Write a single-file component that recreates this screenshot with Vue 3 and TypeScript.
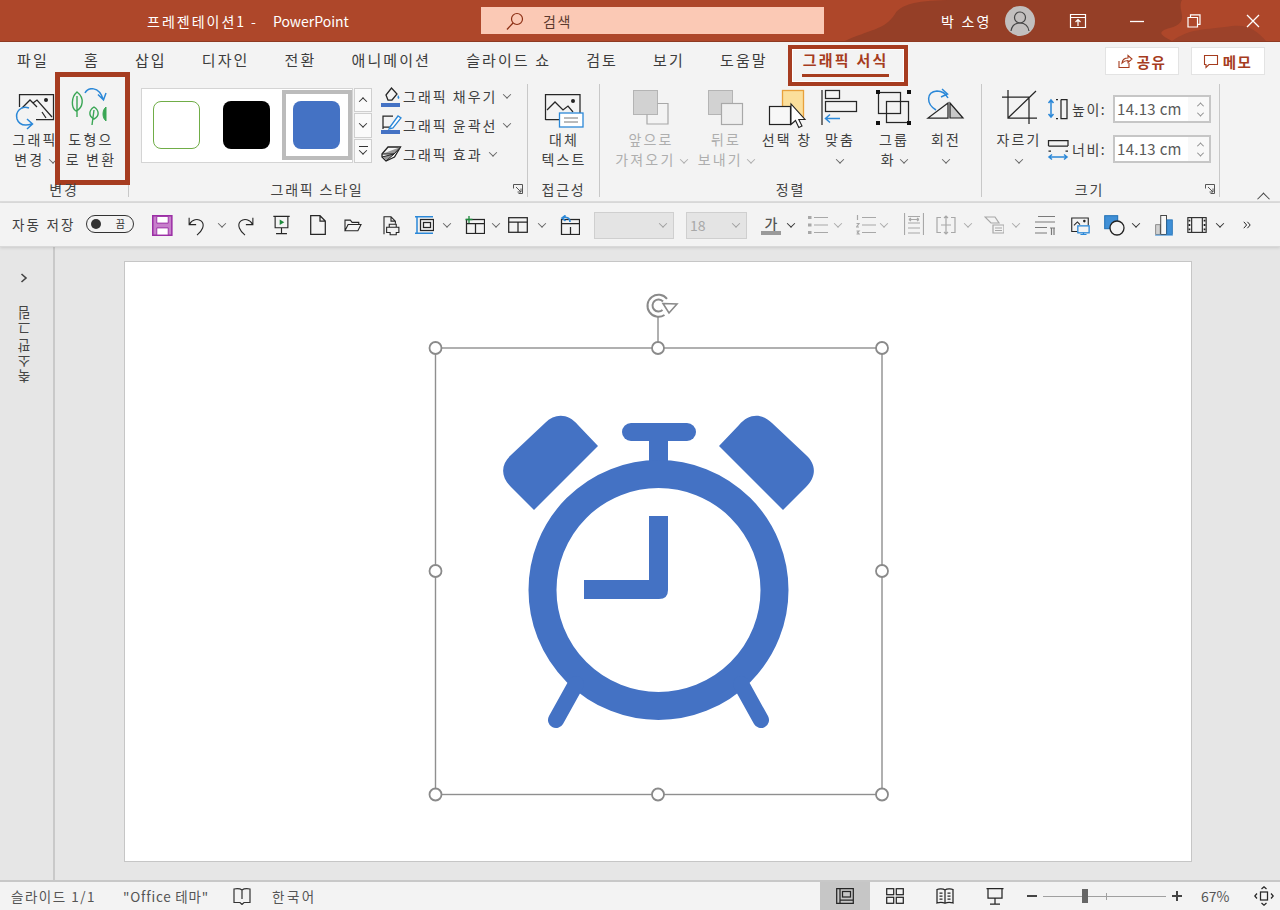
<script setup lang="ts">
const tabs: string[] = ['파일', '홈', '삽입', '디자인', '전환', '애니메이션', '슬라이드 쇼', '검토', '보기', '도움말']
const handles: [number, number][] = [
  [435.5, 348], [658, 348], [882, 348], [435.5, 571], [882, 571], [435.5, 794.5], [658, 794.5], [882, 794.5],
]
</script>

<template>
  <div class="app">
    <header class="titlebar">
      <svg class="title-art" viewBox="0 0 1280 41" width="1280" height="41">
        <path d="M845 41C868 30 885 30 895 14 902 2 925 0 960 0H1182C1176 10 1192 22 1170 28 1155 32 1162 36 1172 41Z" fill="#953f27" />
        <path d="M1172 41C1190 28 1205 30 1232 26 1250 24 1258 32 1266 41Z" fill="#9c422a" />
      </svg>
      <div class="doc-title"><span class="doc-name">프레젠테이션1</span><span class="dash">-</span><span>PowerPoint</span></div>
      <div class="search">
        <svg width="20" height="20" viewBox="0 0 20 20"><circle cx="12" cy="8" r="5.500" fill="none" stroke="#8c2f14" stroke-width="1.200" /><path d="M8 12 2 18.500" stroke="#8c2f14" stroke-width="1.300" /></svg>
        <span>검색</span>
      </div>
      <div class="user">박 소영</div>
      <div class="avatar">
        <svg width="30" height="30" viewBox="0 0 30 30"><circle cx="15" cy="11.500" r="5.500" fill="none" stroke="#444" stroke-width="1.200" /><path d="M6 25c1-6 4.500-8 9-8s8 2 9 8" fill="none" stroke="#444" stroke-width="1.200" /></svg>
      </div>
      <svg class="win w-mode" width="20" height="16" viewBox="0 0 20 16"><path d="M2.500 1.500h15v13h-15zM2.500 4.500h15M10 13V7M7.500 9 10 6.500 12.500 9" fill="none" stroke="#fff" stroke-width="1.200" /></svg>
      <svg class="win w-min" width="14" height="14" viewBox="0 0 14 14"><path d="M0 7.500h14" stroke="#fff" stroke-width="1.300" /></svg>
      <svg class="win w-max" width="14" height="14" viewBox="0 0 14 14"><path d="M3.500 3V.8h9.500v9.500h-2.500M1 3.500h9.500V13H1z" fill="none" stroke="#fff" stroke-width="1.200" /></svg>
      <svg class="win w-close" width="14" height="14" viewBox="0 0 14 14"><path d="M1 1l12 12M13 1 1 13" stroke="#fff" stroke-width="1.300" /></svg>
    </header>

    <nav class="tabs">
      <span v-for="t in tabs" :key="t" class="tab">{{ t }}</span>
      <span class="tab tab-active">그래픽 서식</span>
      <div class="tab-actions">
        <button class="pill">
          <svg width="16" height="16" viewBox="0 0 16 16"><path d="M2 8v6.500h10V10M5 10c.5-3.500 3-5 6-5V2.500L15 6l-4 3.500V7.500c-2.500 0-4.500 1-6 2.500z" fill="none" stroke="#a63c1e" stroke-width="1.100" /></svg>
          <span>공유</span>
        </button>
        <button class="pill">
          <svg width="16" height="16" viewBox="0 0 16 16"><path d="M1.500 2.500h13v9H6l-3 3v-3H1.500z" fill="none" stroke="#a63c1e" stroke-width="1.100" /></svg>
          <span>메모</span>
        </button>
      </div>
    </nav>

    <section class="ribbon">
      <div class="group g1">
        <div class="group-body">
          <div class="big w-change">
            <svg width="42" height="42" viewBox="14 88 42 42">
              <path class="ln" d="M19.500 107V94.500H53.500V119.500H36" />
              <path class="ln" d="M22 108 30 100 37 107M33 103 37 100 52 117M42 112 46 118" />
              <circle cx="46" cy="100" r="2" fill="#222" />
              <path class="bl" d="M29 108C21 105 15 112 17 119 19 125 25 126 32 124M27 119 32.500 124 27 129" />
            </svg>
            <div class="lbl">그래픽<br />변경 <i class="ch"></i></div>
          </div>
          <div class="big w-convert annot">
            <svg width="44" height="42" viewBox="70 88 44 42">
              <path class="gr" d="M78 92C72 97 72 108 77 111 84 108 86 98 78 92ZM78 96V117" />
              <path class="bl" d="M86 93C89 87 100 86 104 99M99 94.500 104.500 100 107 93" />
              <path class="gr" d="M95 107C90 110 89 116 95 119 101 116 100 110 95 107ZM95 110 93 125" />
              <path d="M107 107C103 110 103 118 107 121Z" fill="#3aa655" stroke="#3aa655" />
            </svg>
            <div class="lbl">도형으<br />로 변환</div>
          </div>
        </div>
        <div class="group-name">변경</div>
      </div>

      <div class="group g2">
        <div class="group-body styles">
          <div class="gallery">
            <div class="swatch-cell"><div class="swatch s-white"></div></div>
            <div class="swatch-cell"><div class="swatch s-black"></div></div>
            <div class="swatch-cell selected"><div class="swatch s-blue"></div></div>
          </div>
          <div class="spinner">
            <div class="spin-btn"><i class="ch up dark"></i></div>
            <div class="spin-btn"><i class="ch dark"></i></div>
            <div class="spin-btn more"><i class="bar"></i><i class="ch dark"></i></div>
          </div>
          <div class="style-list">
            <div class="style-row">
              <svg width="22" height="24" viewBox="378 84 22 24">
                <path class="ln" d="M384 95 389.500 88 395 94 390 100H386Z" />
                <path d="M396 95c1.500 2 2 3 .5 4-1.500-1-1-2-.5-4z" fill="#2b88d8" />
                <path d="M379 103h19v4h-19z" fill="#4472c4" />
              </svg>
              <span>그래픽 채우기</span><i class="ch"></i>
            </div>
            <div class="style-row">
              <svg width="22" height="24" viewBox="378 113 22 24">
                <path class="ln" d="M381 129V116H391M381 127H388" />
                <path d="M388 127 396 116 399 118 391 128 387 129Z" fill="#fff" stroke="#2b88d8" stroke-width="1.300" />
                <path d="M379 130h19v4h-19z" fill="#4472c4" />
              </svg>
              <span>그래픽 윤곽선</span><i class="ch"></i>
            </div>
            <div class="style-row">
              <svg width="22" height="24" viewBox="378 143 22 24">
                <path d="M380 155 386 148H398.500L392.500 158 384 162 380 158Z" fill="#f7f7f7" stroke="#222" stroke-width="1.300" />
                <path d="M380 155H392L398.500 148M392 155 384 162 380 158Z" fill="#9a9a9a" stroke="#222" stroke-width="1" />
              </svg>
              <span>그래픽 효과</span><i class="ch"></i>
            </div>
          </div>
        </div>
        <div class="group-name name-styles">그래픽 스타일
          <svg class="launcher" width="10" height="10" viewBox="0 0 10 10"><path d="M.500 4.500V.5H9.500V9.500H5.500M3 3 8 8M8 4.500V8H4.500" fill="none" stroke="#555" /></svg>
        </div>
      </div>

      <div class="group g3">
        <div class="group-body">
          <div class="big w-alt">
            <svg width="42" height="42" viewBox="545 88 42 42">
              <path class="ln" d="M547.500 120V94.500H582V113M547.500 119.500H561" />
              <path class="ln" d="M549 110 557 102 565 110 570 106 575 112" />
              <circle cx="575" cy="101" r="2" fill="#222" />
              <rect x="561.500" y="113" width="23.500" height="14" fill="#fff" stroke="#2b88d8" stroke-width="1.300" />
              <path d="M566 118h14M566 122h14" stroke="#777" />
            </svg>
            <div class="lbl">대체<br />텍스트</div>
          </div>
        </div>
        <div class="group-name">접근성</div>
      </div>

      <div class="group g4">
        <div class="group-body">
          <div class="big w-front off">
            <svg width="44" height="42" viewBox="630 88 44 42">
              <rect x="634.500" y="90.500" width="24" height="24" fill="#d2d2d2" stroke="#b4b4b4" />
              <path d="M658.500 103.500H669V124H648V114.500" fill="none" stroke="#a8a8a8" stroke-width="1.200" />
            </svg>
            <div class="lbl">앞으로<br />가져오기 <i class="ch"></i></div>
          </div>
          <div class="big w-back off">
            <svg width="44" height="42" viewBox="704 88 44 42">
              <rect x="708.500" y="90.500" width="24" height="24" fill="#d2d2d2" stroke="#b4b4b4" />
              <rect x="721.500" y="103.500" width="21" height="21" fill="#efefef" stroke="#a8a8a8" stroke-width="1.200" />
            </svg>
            <div class="lbl">뒤로<br />보내기 <i class="ch"></i></div>
          </div>
          <div class="big w-pane">
            <svg width="44" height="42" viewBox="765 88 44 42">
              <rect x="782.500" y="90.500" width="21" height="28" fill="#fbdf9b" stroke="#e8a13c" stroke-width="1.300" />
              <rect x="769.500" y="106.500" width="21" height="18" fill="#f7f7f7" stroke="#222" stroke-width="1.200" />
              <path d="M791 104V124.500L795.500 120.500 798.800 127.500 802 126 798.800 119.500H805Z" fill="#fff" stroke="#222" stroke-width="1.100" />
            </svg>
            <div class="lbl">선택 창</div>
          </div>
          <div class="big w-align">
            <svg width="40" height="42" viewBox="822 88 40 42">
              <path class="ln" d="M824 90V125" />
              <rect class="ln" x="827.500" y="90.500" width="14" height="8" />
              <rect class="ln" x="827.500" y="101.500" width="31" height="10" />
              <path class="bl" d="M842 118.500H828M832 114.500 827.500 118.500 832 122.500" />
            </svg>
            <div class="lbl">맞춤<br /><i class="ch"></i></div>
          </div>
          <div class="big w-group">
            <svg width="40" height="42" viewBox="874 88 40 42">
              <rect class="ln" x="878.500" y="92.500" width="22" height="21" />
              <rect class="ln" x="886.500" y="101.500" width="22" height="21" />
              <path d="M876 90h4v4h-4zM907 90h4v4h-4zM876 121h4v4h-4zM907 121h4v4h-4z" fill="#111" />
            </svg>
            <div class="lbl">그룹<br />화 <i class="ch"></i></div>
          </div>
          <div class="big w-rotate">
            <svg width="40" height="42" viewBox="926 88 40 42">
              <path class="ln" d="M928 118H948V103Z" />
              <path d="M950 103 963 118H950Z" fill="#c9c9c9" stroke="#222" stroke-width="1.200" />
              <path class="bl" d="M936 110C926 104 926 92 937 91 942 91 946 94 948 98M942 89 947.500 94 941 97" />
            </svg>
            <div class="lbl">회전<br /><i class="ch"></i></div>
          </div>
        </div>
        <div class="group-name name-arrange">정렬</div>
      </div>

      <div class="group g5">
        <div class="group-body">
          <div class="big w-crop">
            <svg width="42" height="42" viewBox="998 88 42 42">
              <path class="ln" d="M1008 90V118H1037M1002 97H1029V124M1008 118 1036 91" />
            </svg>
            <div class="lbl">자르기<br /><i class="ch"></i></div>
          </div>
          <div class="size-col">
            <div class="size-row">
              <svg width="22" height="24" viewBox="1048 97 22 24">
                <path class="bl" d="M1052 100V117M1049.500 103 1052 100 1054.500 103M1049.500 114 1052 117 1054.500 114" />
                <path class="ln" d="M1062 99.500H1068V118.500H1062V99.500M1057 99.500H1059M1057 118.500H1059" />
              </svg>
              <span class="size-label">높이:</span>
              <div class="spinbox"><span class="val">14.13 cm</span><span class="arrows"><i class="ch up light"></i><i class="ch light"></i></span></div>
            </div>
            <div class="size-row">
              <svg width="22" height="24" viewBox="1048 136 22 24">
                <path class="ln" d="M1049.500 145V139.500H1069V145M1049.500 145H1069M1049.500 150H1052M1066.500 150H1069" />
                <path class="bl" d="M1050 156H1068M1053 153.500 1050 156 1053 158.500M1065 153.500 1068 156 1065 158.500" />
              </svg>
              <span class="size-label">너비:</span>
              <div class="spinbox"><span class="val">14.13 cm</span><span class="arrows"><i class="ch up light"></i><i class="ch light"></i></span></div>
            </div>
          </div>
        </div>
        <div class="group-name name-size">크기
          <svg class="launcher" width="10" height="10" viewBox="0 0 10 10"><path d="M.500 4.500V.5H9.500V9.500H5.500M3 3 8 8M8 4.500V8H4.500" fill="none" stroke="#555" /></svg>
        </div>
      </div>
      <div class="collapse"><i class="ch up big-ch"></i></div>
    </section>

    <div class="qat">
      <span class="qat-label">자동 저장</span>
      <span class="toggle"><i class="knob"></i><span class="off-text">끔</span></span>
      <svg width="21" height="21" viewBox="0 0 22 22"><rect x=".8" y=".8" width="20" height="20.400" fill="#c77fcb" stroke="#9b2fa5" stroke-width="1.600" /><path d="M5 1.500h12v7H5zM5 13.500h12V21H5z" fill="#fff" stroke="#9b2fa5" /></svg>
      <svg width="18" height="21" viewBox="0 0 20 24"><path class="ln" d="M1 3V11H9M1.500 10.500C4 5 11 3.500 15 7 19.500 11.500 16 18 10 23" /></svg>
      <i class="ch q"></i>
      <svg width="18" height="21" viewBox="0 0 20 24"><path class="ln" d="M19 3V11H11M18.500 10.500C16 5 9 3.500 5 7 .5 11.500 4 18 10 23" /></svg>
      <svg width="19" height="20" viewBox="0 0 20 22"><path class="ln" d="M1 1.500H19M3 2V14H17V2M10 14V20M4 20.500H16" /><path d="M8 5 13 8 8 11Z" fill="#1e8a3c" /></svg>
      <svg width="16" height="20" viewBox="0 0 16 20"><path class="ln" d="M.7 .7H10L15.300 6V19.300H.7ZM10 .7V6H15.300" /></svg>
      <svg width="20" height="16" viewBox="0 0 20 18"><path class="ln" d="M1 15.500V3.500H7L9 6H16.500V8.500M1 15.500 4.500 8.500H19L15.500 15.500Z" /></svg>
      <svg width="18" height="21" viewBox="0 0 20 24"><path class="ln" d="M2 22V2H10L15 7V10M10 2V7H15" /><path class="ln" d="M5 14H19V20H16V22.500H9V20H5ZM8 14V10.500H16V14" /></svg>
      <svg width="20" height="18" viewBox="0 0 20 18"><path class="bl" d="M1 .8H19M1 17.200H19M3 1V17" /><rect class="ln" x="6.500" y="3.500" width="13" height="11" /><rect class="ln" x="9.500" y="6.500" width="7" height="5" /></svg>
      <i class="ch q"></i>
      <svg width="21" height="18" viewBox="0 0 21 18"><rect class="ln" x="2.500" y="3.500" width="18" height="14" /><path class="ln" d="M2.500 7.500H20.500M11.500 7.500V17.500" /><path d="M5 0V7M1.500 3.500H8.500" stroke="#1e8a3c" stroke-width="1.300" /></svg>
      <i class="ch q"></i>
      <svg width="20" height="16" viewBox="0 0 20 16"><rect class="ln" x=".7" y=".7" width="18.600" height="14.600" /><path class="ln" d="M.7 5H19.300M10 5V15.300" /></svg>
      <i class="ch q"></i>
      <svg width="20" height="20" viewBox="0 0 20 20"><rect class="ln" x="1.500" y="4.500" width="18" height="15" /><path class="ln" d="M1.500 8.500H19.500M10.500 12V19.500" /><path class="bl bl2" d="M10 7C10 2.500 6 1.500 2.500 3M5.500 .3 2 3 5.500 6" /></svg>
      <div class="dd off-box wide"><i class="ch"></i></div>
      <div class="dd off-box narrow"><span>18</span><i class="ch"></i></div>
      <div class="ga"><span>가</span><i></i></div>
      <i class="ch q dark-q"></i>
      <svg class="dis" width="20" height="22" viewBox="0 0 20 22"><path d="M6 3.500H20M6 11H20M6 18.500H20" /><path class="sq" d="M0 2h3.500v3H0zM0 9.500h3.500v3H0zM0 17h3.500v3H0z" /></svg>
      <i class="ch q off-ch"></i>
      <svg class="dis" width="20" height="22" viewBox="0 0 20 22"><path d="M6 3.500H20M6 11H20M6 18.500H20M1.500 1V6M.5 9.500H3L.5 13H3M.5 17H3L1.500 18.500 3 20H.5" /></svg>
      <i class="ch q off-ch"></i>
      <svg class="dis" width="20" height="24" viewBox="0 0 20 24"><path d="M.5 0V22M19.500 0V22M4 3.500H16M4 10H16M4 15H16M4 20H16M5 6.500H15M5 6.500 7 5M5 6.500 7 8M15 6.500 13 5M15 6.500 13 8" /></svg>
      <svg class="dis" width="20" height="22" viewBox="0 0 20 22"><path d="M5 3.500H1V18.500H5M15 3.500H19V18.500H15M5 11H15M10 2V20M8 4 10 2 12 4M8 18 10 20 12 18" /></svg>
      <i class="ch q off-ch"></i>
      <svg class="dis" width="20" height="18" viewBox="0 0 20 18"><path d="M1 1H11L15 7H7ZM9 9H20V17H9ZM11 12H18M11 14.500H18" /></svg>
      <i class="ch q off-ch"></i>
      <svg class="dis darker" width="20" height="22" viewBox="0 0 20 22"><path d="M3 2.500H20M0 8H20M0 13.500H12M0 19H12M15 14H20M16.500 14V21M19 14V21" /></svg>
      <svg width="20" height="20" viewBox="0 0 22 23"><path class="ln" d="M8 19H1.500V3.500H20.500V12" /><path class="ln" d="M4 12 8 8 11 11" /><circle cx="16" cy="7" r="1.500" fill="#222" /><rect class="bl" x="8.500" y="12.500" width="13" height="8" /><path class="bl" d="M15 20.500V23M11.500 22.500H18.500" /></svg>
      <svg width="22" height="21" viewBox="0 0 22 21"><rect x=".7" y=".7" width="13" height="13" fill="#3f8fd6" stroke="#1f6fb5" /><circle cx="13" cy="13" r="7" fill="#f3f3f3" stroke="#222" stroke-width="1.300" /></svg>
      <i class="ch q dark-q"></i>
      <svg width="20" height="21" viewBox="0 0 22 26"><rect x=".7" y="12" width="5.600" height="12" fill="#d0d0d0" stroke="#777" /><rect x="7" y=".7" width="7" height="23.300" fill="#f7f7f7" stroke="#222" /><rect x="14.500" y="6" width="6.800" height="18" fill="#3f8fd6" stroke="#1f6fb5" /><path d="M0 25H22" stroke="#2b88d8" /></svg>
      <svg width="20" height="16" viewBox="0 0 22 18"><rect class="ln" x=".7" y=".7" width="20.600" height="16.600" /><path class="ln" d="M5 1V17M17 1V17" /><path d="M1.500 3h2v2h-2zM1.500 8h2v2h-2zM1.500 13h2v2h-2zM18.500 3h2v2h-2zM18.500 8h2v2h-2zM18.500 13h2v2h-2z" fill="#222" /></svg>
      <i class="ch q dark-q"></i>
      <svg class="more-ic" width="8" height="8" viewBox="0 0 10 10"><path class="ln" d="M1 1 4.500 5 1 9M5.500 1 9 5 5.500 9" /></svg>
    </div>

    <main class="workspace">
      <aside class="thumbs">
        <svg width="8" height="10" viewBox="0 0 8 10"><path d="M1.500 1 6 5 1.500 9" fill="none" stroke="#444" stroke-width="1.600" /></svg>
        <span class="thumb-text">축소판 그림</span>
      </aside>
      <div class="stage">
        <div class="slide">
          <svg class="canvas" viewBox="124 261 1068 601" width="1068" height="601">
            <g fill="#4472c4">
              <path d="M598 446 534 510 511 487C500 476 501 464 511 455L545 423C555 413 568 413 578 425Z" />
              <path d="M719 446 783 510 806 487C817 476 816 464 806 455L772 423C762 413 749 413 739 425Z" />
              <rect x="622" y="423" width="74" height="18" rx="9" />
              <rect x="649" y="440" width="19" height="24" />
              <path d="M649 516H668V590Q668 599 659 599H584V580H649Z" />
            </g>
            <circle cx="658.500" cy="590" r="116" fill="none" stroke="#4472c4" stroke-width="28" />
            <path d="M576 684 556 720M741 684 761 720" fill="none" stroke="#4472c4" stroke-width="16" stroke-linecap="round" />
            <rect x="435.500" y="348" width="446.500" height="446.500" fill="none" stroke="#8f8f8f" stroke-width="1.400" />
            <path d="M658 316V342" stroke="#8f8f8f" stroke-width="1.400" />
            <circle v-for="(h, i) in handles" :key="i" :cx="h[0]" :cy="h[1]" r="6" fill="#fff" stroke="#8a8a8a" stroke-width="1.800" />
            <g fill="none" stroke="#8a8a8a">
              <path d="M664.500 315A11 11 0 1 1 667 298.800" stroke-width="2" />
              <path d="M662.500 310A6 6 0 1 1 663 301.500" stroke-width="2" />
              <path d="M663 303.500 677 304 669 313Z" fill="#fff" stroke-width="1.600" />
            </g>
          </svg>
        </div>
      </div>
    </main>

    <footer class="status">
      <span class="st-slide">슬라이드 1/1</span>
      <span class="st-theme">"Office 테마"</span>
      <svg class="st-book" width="18" height="18" viewBox="0 0 18 18"><path d="M9 3C7 1.500 4 1.500 1 2V15.500H7L9 17.500 11 15.500H17V2C14 1.500 11 1.500 9 3ZM9 3V12" fill="none" stroke="#333" stroke-width="1.200" /></svg>
      <span class="st-lang">한국어</span>
      <div class="views">
        <span class="view active"><svg width="18" height="16" viewBox="0 0 18 16"><path class="ln" d="M.7.7H17.300V15.300H.7ZM4 .7V15.300M4 12H17.300" /><rect class="ln" x="6.500" y="3.500" width="8" height="5.500" /></svg></span>
        <span class="view"><svg width="18" height="16" viewBox="0 0 18 16"><rect class="ln" x=".7" y=".7" width="7" height="6" /><rect class="ln" x="10.300" y=".7" width="7" height="6" /><rect class="ln" x=".7" y="9.300" width="7" height="6" /><rect class="ln" x="10.300" y="9.300" width="7" height="6" /></svg></span>
        <span class="view"><svg width="18" height="16" viewBox="0 0 18 16"><path class="ln" d="M9 2C7 .7 3 .7 1 1.500V15C3 14.300 7 14.300 9 15.300 11 14.300 15 14.300 17 15V1.500C15 .7 11 .7 9 2ZM9 2V15M3.500 5H6.500M3.500 8H6.500M3.500 11H6.500M11.500 5H14.500M11.500 8H14.500M11.500 11H14.500" /></svg></span>
        <span class="view"><svg width="18" height="18" viewBox="0 0 18 18"><path class="ln" d="M.5 1.500H17.500M2 2V11H16V2M9 11V16.500M4 17H14" /></svg></span>
      </div>
      <div class="zoom">
        <i class="minus"></i>
        <div class="slider"><i class="tick"></i><i class="thumb"></i></div>
        <i class="plus"></i>
      </div>
      <span class="pct">67%</span>
      <svg class="fit" width="20" height="20" viewBox="0 0 20 20"><rect class="ln" x="6.500" y="6" width="7" height="8" /><path class="ln" d="M7.500 3 10 .8 12.500 3M7.500 17 10 19.200 12.500 17M3 7.500.8 10 3 12.500M17 7.500 19.200 10 17 12.500" /></svg>
    </footer>
  </div>
</template>

<style>
html, body { margin: 0; background: #e6e6e6; }
</style>

<style scoped>
.app {
  width: 1280px;
  height: 910px;
  display: flex;
  flex-direction: column;
  overflow: hidden;
  font-family: "Noto Sans CJK KR", "Noto Sans", sans-serif;
  color: #444;
  background: #f3f3f3;
}
i { display: block; font-style: normal; }
.ln { fill: none; stroke: #262626; stroke-width: 1.250; }
.bl { fill: none; stroke: #2b88d8; stroke-width: 1.500; }
.bl2 { stroke-width: 1.600; }
.gr { fill: none; stroke: #3aa655; stroke-width: 1.400; }

/* chevron */
.ch {
  display: inline-block;
  width: 5px;
  height: 5px;
  border-right: 1.300px solid #666;
  border-bottom: 1.300px solid #666;
  transform: rotate(45deg) translate(-1px, -1px);
  vertical-align: middle;
}
.ch.up { transform: rotate(225deg) translate(-1px, -1px); }
.ch.dark { border-color: #333; }
.ch.light { border-color: #8a8a8a; width: 4px; height: 4px; }

/* title bar */
.titlebar {
  position: relative;
  flex: none;
  height: 41px;
  display: flex;
  align-items: center;
  background: #ae472a;
  border-bottom: 1px solid #8f3a22;
  color: #fff;
  font-size: 14px;
}
.title-art { position: absolute; left: 0; top: 0; }
.doc-title { position: relative; margin-left: 147px; width: 334px; display: flex; }
.doc-name { letter-spacing: 2px; }
.dash { margin: 0 17px 0 5px; }
.search {
  position: relative;
  width: 343px;
  height: 27px;
  box-sizing: border-box;
  padding-left: 24px;
  display: flex;
  align-items: center;
  gap: 18px;
  background: #fbc9b5;
  color: #5a3a2e;
  letter-spacing: 1.500px;
}
.user { position: relative; margin-left: 117px; width: 64px; letter-spacing: 2.200px; white-space: nowrap; }
.avatar {
  position: relative;
  width: 30px;
  height: 30px;
  border-radius: 50%;
  background: #c2bfbe;
}
.win { position: relative; flex: none; }
.w-mode { margin-left: 33px; }
.w-min { margin-left: 42px; }
.w-max { margin-left: 43px; }
.w-close { margin-left: 45px; }

/* tabs */
.tabs {
  flex: none;
  height: 42px;
  box-sizing: border-box;
  padding: 7px 0 0 17px;
  display: flex;
  gap: 35.100px;
  font-size: 15px;
  letter-spacing: 2.100px;
  line-height: 22px;
  white-space: nowrap;
  color: #3c3c3c;
}
.tab-active {
  position: relative;
  color: #a63c1e;
  font-weight: 700;
  letter-spacing: 2.200px;
}
.tab-active::before {
  content: "";
  position: absolute;
  left: -15px;
  right: -20px;
  top: -4px;
  height: 41px;
  box-sizing: border-box;
  border: 4px solid #a63c20;
  box-shadow: inset 0 0 0 1px #fff;
}
.tab-active::after {
  content: "";
  position: absolute;
  left: -1px;
  right: -1px;
  top: 25px;
  height: 3px;
  background: #a63c1e;
}
.tab-actions { margin-left: 181px; display: flex; gap: 12px; margin-top: -2px; }
.pill {
  width: 74px;
  height: 28px;
  box-sizing: border-box;
  display: flex;
  align-items: center;
  justify-content: center;
  gap: 4px;
  padding: 0;
  background: #fff;
  border: 1px solid #e3e3e3;
  font: 700 14.500px "Noto Sans CJK KR", sans-serif;
  letter-spacing: 1.500px;
  color: #a63c1e;
}

/* ribbon */
.ribbon {
  position: relative;
  flex: none;
  height: 117px;
  display: flex;
  border-bottom: 2px solid #dcdcdc;
  box-sizing: content-box;
}
.group {
  flex: none;
  height: 113px;
  box-sizing: border-box;
  display: flex;
  flex-direction: column;
  border-right: 1.500px solid #c8c8c8;
}
.group-body { flex: none; height: 97px; display: flex; }
.group-name {
  position: relative;
  flex: none;
  text-align: center;
  font-size: 14px;
  line-height: 16px;
  letter-spacing: 1.800px;
  color: #444;
}
.name-styles { padding-right: 22px; }
.name-arrange { padding-right: 12px; }
.name-size { padding-right: 34px; }
.launcher { position: absolute; right: 4px; top: 3px; }
.g1 { width: 129px; }
.g2 { width: 399px; }
.g3 { width: 72px; }
.g4 { width: 382px; padding-left: 12px; }
.g5 { width: 238px; padding-left: 12px; }
.big {
  position: relative;
  flex: none;
  display: flex;
  flex-direction: column;
  align-items: center;
  padding-top: 4px;
}
.big svg { flex: none; }
.lbl {
  margin-top: -1px;
  text-align: center;
  font-size: 14px;
  line-height: 20px;
  letter-spacing: 2.200px;
  white-space: nowrap;
  color: #3f3f3f;
}
.w-change { width: 56px; margin-left: 7px; margin-right: -7px; }
.w-convert { width: 70px; margin-left: 0; }
.annot::after {
  content: "";
  position: absolute;
  left: -1px;
  right: -4px;
  top: -12px;
  height: 113px;
  box-sizing: border-box;
  border: 5px solid #a63c20;
}
.w-alt { width: 72px; }
.w-front { width: 78px; }
.w-back { width: 72px; }
.w-pane { width: 50px; }
.w-align { width: 56px; }
.w-group { width: 52px; }
.w-rotate { width: 52px; }
.off .lbl { color: #aeaeae; }
.off .ch { border-color: #aeaeae; }
.w-crop { width: 50px; }

.styles { padding: 4px 0 0 12px; box-sizing: border-box; }
.gallery {
  width: 212px;
  height: 75px;
  box-sizing: border-box;
  padding: 1px 0 2px 1px;
  display: flex;
  justify-content: flex-end;
  gap: 0;
  background: #fff;
  border: 1px solid #d4d4d4;
}
.swatch-cell {
  width: 70px;
  display: flex;
  align-items: center;
  justify-content: center;
  box-sizing: border-box;
  border: 4px solid transparent;
}
.swatch-cell.selected { border-color: #bcbcbc; }
.swatch { width: 47px; height: 48px; box-sizing: border-box; border-radius: 8px; margin-right: 1px; }
.s-white { background: #fff; border: 1.500px solid #70ad47; margin-right: 3px; }
.s-black { background: #000; }
.s-blue { background: #4472c4; }
.spinner { width: 18px; margin-left: 1px; height: 75px; display: flex; flex-direction: column; gap: 1px; }
.spin-btn {
  flex: 1;
  display: flex;
  flex-direction: column;
  align-items: center;
  justify-content: center;
  background: #fafafa;
  border: 1px solid #cfcfcf;
}
.more .bar { width: 9px; height: 1px; background: #333; margin-bottom: 2px; }
.style-list { margin-left: 8px; display: flex; flex-direction: column; gap: 5px; margin-top: -4px; }
.style-row {
  height: 24px;
  display: flex;
  align-items: center;
  gap: 1px;
  font-size: 14px;
  letter-spacing: 2px;
  white-space: nowrap;
  color: #3f3f3f;
}
.style-row .ch { margin-left: 6px; }
.size-col { display: flex; flex-direction: column; gap: 16px; margin-left: 3px; padding-top: 13px; }
.size-row { display: flex; align-items: center; height: 24px; font-size: 14px; white-space: nowrap; color: #3f3f3f; }
.size-label { width: 41px; margin-left: 3px; letter-spacing: 1.500px; }
.spinbox {
  width: 98px;
  height: 28px;
  box-sizing: border-box;
  display: flex;
  align-items: center;
  justify-content: space-between;
  border: 2px solid #c6c6c6;
  background: #f8f8f8;
}
.val { width: 73px; height: 24px; line-height: 24px; background: #fff; font-size: 15px; padding-left: 2px; box-sizing: border-box; color: #5a5a5a; letter-spacing: .300px; white-space: nowrap; }
.arrows { width: 18px; display: flex; flex-direction: column; align-items: center; gap: 5px; }
.collapse { position: absolute; left: 1259px; top: 99px; }
.big-ch { width: 8px; height: 8px; border-color: #444; }

/* quick access */
.qat {
  flex: none;
  height: 44px;
  box-sizing: border-box;
  padding: 1px 0 0 12px;
  display: grid;
  grid-template-columns: 74px 66px 36px 28px 20px 36px 38px 33px 39px 32px 27px 23px 26px 18px 28px 24px 34px 92px 75px 24px 23px 24px 24px 22px 26px 32px 26px 22px 26px 25px 35px 34px 26px 24px 33px 27px 29px 20px;
  align-items: center;
  border-bottom: 1px solid #d9d9d9;
  box-shadow: 0 1px 3px rgba(0,0,0,.12);
  position: relative;
}
.qat-label { font-size: 13.500px; letter-spacing: 2.200px; white-space: nowrap; color: #3f3f3f; margin-top: -3px; }
.toggle {
  width: 48px;
  height: 18px;
  box-sizing: border-box;
  border: 1.400px solid #333;
  border-radius: 9px;
  display: flex;
  align-items: center;
  justify-content: space-between;
  padding: 0 8px 0 4px;
  margin-top: -2px;
}
.knob { width: 10px; height: 10px; border-radius: 50%; background: #333; }
.off-text { font-size: 10px; line-height: 12px; color: #333; }
.q { margin-left: 3px; }
.dark-q { border-color: #333; }
.off-ch { border-color: #aaa; }
.dis path { fill: none; stroke: #a8a8a8; stroke-width: 1.200; }
.dis .sq { fill: #a8a8a8; stroke: none; }
.dis.darker path { stroke: #7a7a7a; }
.dd {
  height: 27px;
  box-sizing: border-box;
  display: flex;
  align-items: center;
  justify-content: flex-end;
  padding: 0 7px 0 3px;
  background: #e4e4e4;
  border: 1px solid #cfcfcf;
  font-size: 14px;
  color: #a8a8a8;
}
.dd .ch { border-color: #a0a0a0; }
.wide { width: 80px; }
.narrow { width: 61px; justify-content: space-between; }
.ga { width: 20px; display: flex; flex-direction: column; align-items: center; font-size: 14px; line-height: 16px; font-weight: 500; color: #555; }
.ga i { width: 20px; height: 4px; background: #9a9a9a; }
.more-ic { margin-left: 0; }

/* workspace */
.workspace {
  flex: 1;
  min-height: 0;
  display: flex;
  background: #e6e6e6;
}
.thumbs {
  flex: none;
  display: flex;
  flex-direction: column;
  align-items: center;
  padding: 26px 5px 0 0;
  gap: 22px;
  border-right: 2px solid #c9c9c9;
  box-sizing: content-box;
  width: 48px;
}
.thumb-text {
  writing-mode: vertical-rl;
  transform: rotate(180deg);
  font-size: 13.500px;
  letter-spacing: 1.200px;
  color: #444;
  white-space: nowrap;
}
.stage { flex: 1; padding: 14px 0 0 69px; box-sizing: border-box; }
.slide {
  width: 1068px;
  height: 601px;
  box-sizing: border-box;
  background: #fff;
  outline: 1px solid #c6c6c6;
  outline-offset: -1px;
}
.canvas { display: block; }

/* status */
.status {
  flex: none;
  height: 30px;
  box-sizing: border-box;
  display: flex;
  align-items: center;
  border-top: 2px solid #c8c8c8;
  font-size: 13.500px;
  color: #555;
  white-space: nowrap;
}
.st-slide { margin-left: 11px; width: 112px; letter-spacing: 1.500px; }
.st-theme { width: 110px; letter-spacing: .800px; }
.st-book { flex: none; }
.st-lang { margin-left: 21px; width: 548px; letter-spacing: 2.500px; }
.views { display: flex; height: 28px; }
.view { width: 50px; display: flex; align-items: center; justify-content: center; }
.view.active { background: #c6c6c6; }
.zoom { margin-left: 7px; display: flex; align-items: center; width: 155px; }
.minus { width: 10px; height: 1.500px; background: #444; margin-right: 6px; }
.slider { position: relative; width: 124px; height: 1px; background: #a0a0a0; }
.tick { position: absolute; left: 63px; top: -3px; width: 1px; height: 7px; background: #a0a0a0; }
.thumb { position: absolute; left: 39px; top: -7px; width: 6px; height: 14px; background: #666; }
.plus { position: relative; width: 10px; height: 1.500px; background: #444; margin-left: 6px; }
.plus::after { content: ""; position: absolute; left: 4.250px; top: -4.250px; width: 1.500px; height: 10px; background: #444; }
.pct { margin-left: 19px; width: 53px; font-size: 14px; }
.fit { flex: none; }
</style>
